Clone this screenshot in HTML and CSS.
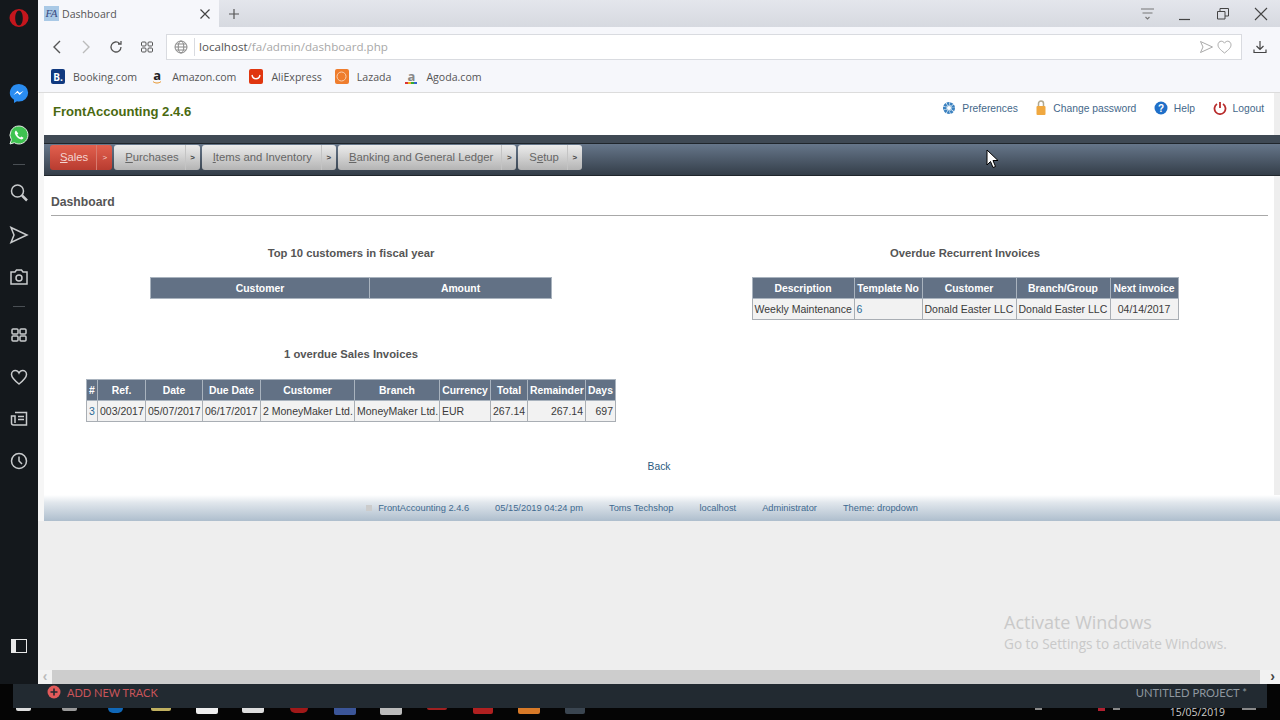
FILE: index.html
```html
<!DOCTYPE html>
<html lang="en">
<head>
  <meta charset="UTF-8">
  <title>Dashboard</title>
  <link rel="stylesheet" href="styles.css">
</head>
<body>
  <div class="screen">
    <aside class="sidebar">
      <div class="slot opera"><svg width="20" height="20" viewBox="0 0 20 20"><path fill-rule="evenodd" d="M10 1a9.500 9 0 1 0 0 18 9.500 9 0 0 0 0-18zm0 1.500c2.200 0 3.800 3.400 3.800 7.500s-1.600 7.500-3.800 7.500S6.200 14.100 6.200 10 7.800 2.500 10 2.500z" fill="#c5161d"/></svg></div>
      <div class="slot"><svg width="20" height="20" viewBox="0 0 20 20"><path d="M10 1a9 8.600 0 0 0-5 15.800V20l3-1.700a10 10 0 0 0 2 .2 9 8.600 0 0 0 0-17.500z" fill="#2a8cf0"/><path d="M4.500 12l4-4.200 2.200 2.200 4-2.200-4 4.200-2.200-2.200z" fill="#fff"/></svg></div>
      <div class="slot"><svg width="20" height="20" viewBox="0 0 20 20"><path d="M10 1a9 9 0 0 0-7.600 13.800L1 19l4.300-1.300A9 9 0 1 0 10 1z" fill="#3fc351" stroke="#e6efe6"/><path d="M7 5.500c-1 .5-1.500 2-1 3.500 1 2.500 3 4.500 5.500 5.300 1.500.3 2.700-.3 3-1.500l-2.200-1.300-1 1c-1.300-.5-2.500-1.700-3-3l1-1z" fill="#fff"/></svg></div>
      <div class="sep"></div>
      <div class="slot"><svg width="20" height="20" viewBox="0 0 20 20" class="line"><circle cx="8.500" cy="8" r="6"/><path d="M13 12.500l5 5" stroke-width="2.500"/></svg></div>
      <div class="slot"><svg width="20" height="20" viewBox="0 0 20 20" class="line"><path d="M2 2.500L18 10 2 17.500 5 10z"/></svg></div>
      <div class="slot"><svg width="20" height="20" viewBox="0 0 20 20" class="line"><path d="M2 5h4l1.500-2h5L14 5h4v12H2z"/><circle cx="10" cy="11" r="3"/></svg></div>
      <div class="sep"></div>
      <div class="slot"><svg width="20" height="20" viewBox="0 0 20 20" class="line"><rect x="3" y="4" width="6" height="5" rx="1"/><rect x="11" y="4" width="6" height="5" rx="1"/><rect x="3" y="11" width="6" height="5" rx="1"/><rect x="11" y="11" width="6" height="5" rx="1"/></svg></div>
      <div class="slot"><svg width="20" height="20" viewBox="0 0 20 20" class="line"><path d="M10 17C5 13 2.500 10.500 2.500 7.500 2.500 5 4.500 3.500 6.300 3.500 8 3.500 9.300 4.500 10 6c.7-1.500 2-2.500 3.700-2.500 1.800 0 3.800 1.500 3.800 4 0 3-2.500 5.500-7.500 9.500z"/></svg></div>
      <div class="slot"><svg width="20" height="20" viewBox="0 0 20 20" class="line"><path d="M6 3.500h11.500v12.500H4.500A2 2 0 0 1 2.500 14V7H6v7"/><path d="M9 7.500h6M9 10.500h6"/></svg></div>
      <div class="slot"><svg width="20" height="20" viewBox="0 0 20 20" class="line"><circle cx="10" cy="10" r="7.500"/><path d="M10 5.500V10l3 3"/></svg></div>
      <div class="slot-end"><svg width="16" height="14" viewBox="0 0 16 14"><rect x=".5" y=".5" width="15" height="13" fill="#14181c" stroke="#e8e8e8"/><rect x="1" y="1" width="4" height="12" fill="#e8e8e8"/></svg></div>
    </aside>

    <div class="browser">
      <div class="tabstrip">
        <div class="tab">
          <span class="favicon"><i>F</i><i>A</i></span>
          <span class="tab-title">Dashboard</span>
          <svg class="tab-close" width="12" height="12" viewBox="0 0 12 12"><path d="M1.500 1.500l9 9M10.500 1.500l-9 9" stroke="#444" stroke-width="1.200"/></svg>
        </div>
        <svg class="tab-plus" width="12" height="12" viewBox="0 0 12 12"><path d="M6 1v10M1 6h10" stroke="#555" stroke-width="1.200"/></svg>
        <div class="win-controls">
          <svg class="win-filter" width="16" height="16" viewBox="0 0 16 16"><path d="M1 3h13M2.500 7h10M5.500 11l2 2 2-2" fill="none" stroke="#777" stroke-width="1.100"/></svg>
          <svg width="14" height="14" viewBox="0 0 14 14"><path d="M1 12.500h11" stroke="#444" stroke-width="1.200"/></svg>
          <svg width="14" height="14" viewBox="0 0 14 14"><path d="M1.500 4.500h7.500v7.500H1.500zM4 4.500V1.500h8.500V9H9" fill="none" stroke="#444"/></svg>
          <svg width="14" height="14" viewBox="0 0 14 14"><path d="M1 1l12 12M13 1L1 13" stroke="#444" stroke-width="1.100"/></svg>
        </div>
      </div>

      <div class="toolbar">
        <div class="nav-icons">
          <svg width="12" height="16" viewBox="0 0 12 16"><path d="M9 2L3 8l6 6" fill="none" stroke="#555" stroke-width="1.400"/></svg>
          <svg width="12" height="16" viewBox="0 0 12 16"><path d="M3 2l6 6-6 6" fill="none" stroke="#bbb" stroke-width="1.400"/></svg>
          <svg width="14" height="14" viewBox="0 0 14 14"><path d="M12 7a5 5 0 1 1-1.500-3.600M12 1v3H9" fill="none" stroke="#555" stroke-width="1.300"/></svg>
          <svg width="14" height="14" viewBox="0 0 14 14" class="grid-ic"><rect x="1.500" y="2" width="4.500" height="4" rx="1"/><rect x="8" y="2" width="4.500" height="4" rx="1"/><rect x="1.500" y="8" width="4.500" height="4" rx="1"/><rect x="8" y="8" width="4.500" height="4" rx="1"/></svg>
        </div>
        <div class="address">
          <svg class="globe" width="14" height="14" viewBox="0 0 14 14"><g fill="none" stroke="#888"><circle cx="7" cy="7" r="6"/><ellipse cx="7" cy="7" rx="2.800" ry="6"/><path d="M1 7h12M2 4h10M2 10h10"/></g></svg>
          <span class="url"><b>localhost</b>/fa/admin/dashboard.php</span>
          <svg width="15" height="14" viewBox="0 0 15 14"><path d="M1.500 1.500L13.500 7 1.500 12.500 4 7z" fill="none" stroke="#aaa"/></svg>
          <svg width="15" height="14" viewBox="0 0 15 14"><path d="M7.500 13C3 9.500 1 7.500 1 4.800 1 2.700 2.600 1.200 4.300 1.200c1.400 0 2.500.8 3.200 2 .7-1.200 1.800-2 3.200-2C12.400 1.200 14 2.700 14 4.800c0 2.700-2 4.700-6.500 8.200z" fill="none" stroke="#aaa"/></svg>
        </div>
        <svg class="download" width="14" height="14" viewBox="0 0 14 14"><path d="M7 1v8M3.500 6L7 9.500 10.500 6M1 9.500v3h12v-3" fill="none" stroke="#444" stroke-width="1.200"/></svg>
      </div>

      <div class="bookmarks">
        <div class="bm"><span class="bm-ic bm-booking">B.</span>Booking.com</div>
        <div class="bm"><span class="bm-ic bm-amazon">a<svg width="10" height="3" viewBox="0 0 10 3"><path d="M1 .5c2 2 6 2 8 0" fill="none" stroke="#e8952a"/></svg></span>Amazon.com</div>
        <div class="bm"><span class="bm-ic bm-ali"><svg width="10" height="6" viewBox="0 0 10 6"><path d="M1 1c1 5 7 5 8 0" fill="none" stroke="#fff" stroke-width="1.400"/></svg></span>AliExpress</div>
        <div class="bm"><span class="bm-ic bm-lazada"><svg width="11" height="11" viewBox="0 0 11 11"><circle cx="5.500" cy="5.500" r="4.500" fill="none" stroke="#f8d0b0"/></svg></span>Lazada</div>
        <div class="bm"><span class="bm-ic bm-agoda">a<span class="agoda-dots"></span></span>Agoda.com</div>
      </div>

      <div class="viewport">
        <div class="page">
          <header class="fa-header">
            <div class="fa-brand">FrontAccounting 2.4.6</div>
            <nav class="fa-links">
              <a class="fa-link"><svg width="14" height="14" viewBox="0 0 14 14"><circle cx="7" cy="7" r="4.500" fill="none" stroke="#3c82c0" stroke-width="3" stroke-dasharray="2.500 .6"/><circle cx="7" cy="7" r="2.500" fill="none" stroke="#7fb0d8"/></svg>Preferences</a>
              <a class="fa-link"><svg width="12" height="16" viewBox="0 0 12 16"><rect x="1.500" y="6" width="9" height="9" rx="1" fill="#f0a840"/><path d="M3.500 6V3.500a2.500 2.500 0 0 1 5 0V6" fill="none" stroke="#b0a890" stroke-width="1.500"/></svg>Change password</a>
              <a class="fa-link"><svg width="14" height="14" viewBox="0 0 14 14"><circle cx="7" cy="7" r="6.500" fill="#1f6fc8"/><text x="7" y="10.500" class="help-q">?</text></svg>Help</a>
              <a class="fa-link"><svg width="14" height="14" viewBox="0 0 14 14"><path d="M4 3a5.500 5.500 0 1 0 6 0M7 1v6" fill="none" stroke="#b82c2c" stroke-width="1.800"/></svg>Logout</a>
            </nav>
          </header>

          <div class="menu-band"></div>
          <nav class="menu">
            <a class="menu-btn active"><span class="menu-label"><u>S</u>ales</span><span class="menu-arrow">&gt;</span></a>
            <a class="menu-btn"><span class="menu-label"><u>P</u>urchases</span><span class="menu-arrow">&gt;</span></a>
            <a class="menu-btn"><span class="menu-label"><u>I</u>tems and Inventory</span><span class="menu-arrow">&gt;</span></a>
            <a class="menu-btn"><span class="menu-label"><u>B</u>anking and General Ledger</span><span class="menu-arrow">&gt;</span></a>
            <a class="menu-btn"><span class="menu-label">S<u>e</u>tup</span><span class="menu-arrow">&gt;</span></a>
          </nav>

          <div class="content">
            <h2 class="page-title">Dashboard</h2>
            <div class="dash-grid">
              <section>
                <div class="box-title">Top 10 customers in fiscal year</div>
                <table class="data customers">
                  <colgroup><col><col></colgroup>
                  <tr><th>Customer</th><th>Amount</th></tr>
                </table>
                <div class="box-title second">1 overdue Sales Invoices</div>
                <table class="data overdue">
                  <colgroup><col><col><col><col><col><col><col><col><col><col></colgroup>
                  <tr><th>#</th><th>Ref.</th><th>Date</th><th>Due Date</th><th>Customer</th><th>Branch</th><th>Currency</th><th>Total</th><th>Remainder</th><th>Days</th></tr>
                  <tr><td class="num-link">3</td><td>003/2017</td><td>05/07/2017</td><td>06/17/2017</td><td>2 MoneyMaker Ltd.</td><td>MoneyMaker Ltd.</td><td>EUR</td><td class="r">267.14</td><td class="r">267.14</td><td class="r">697</td></tr>
                </table>
              </section>
              <section>
                <div class="box-title">Overdue Recurrent Invoices</div>
                <table class="data recurrent">
                  <colgroup><col><col><col><col><col></colgroup>
                  <tr><th>Description</th><th>Template No</th><th>Customer</th><th>Branch/Group</th><th>Next invoice</th></tr>
                  <tr><td>Weekly Maintenance</td><td class="num-link">6</td><td>Donald Easter LLC</td><td>Donald Easter LLC</td><td class="c">04/14/2017</td></tr>
                </table>
              </section>
            </div>
            <a class="back">Back</a>
          </div>

          <footer class="fa-footer">
            <span class="foot-logo"><span class="foot-mark"></span>FrontAccounting 2.4.6</span>
            <span>05/15/2019 04:24 pm</span>
            <span>Toms Techshop</span>
            <span>localhost</span>
            <span>Administrator</span>
            <span>Theme: dropdown</span>
          </footer>
        </div>
        <div class="hscroll">
          <span class="scroll-btn">&lsaquo;</span>
          <span class="scroll-thumb"></span>
          <span class="scroll-btn dark">&rsaquo;</span>
        </div>
      </div>
    </div>
  </div>

  <div class="dock">
    <div class="track-bar">
      <span class="add-track"><svg width="14" height="14" viewBox="0 0 14 14"><circle cx="7" cy="7" r="6.500" fill="#e25a5a"/><path d="M7 3.500v7M3.500 7h7" stroke="#222a31" stroke-width="1.600"/></svg>ADD NEW TRACK</span>
      <span class="project">UNTITLED PROJECT *</span>
    </div>
    <div class="taskbar">
      <span class="task t-white"></span>
      <span class="task t-outline"></span>
      <span class="task t-blue"></span>
      <span class="task t-yellow"></span>
      <span class="task t-store"></span>
      <span class="task t-white wide"></span>
      <span class="task t-opera"></span>
      <span class="task t-fb"></span>
      <span class="task t-cam"></span>
      <span class="task t-dark-red"></span>
      <span class="task t-red"></span>
      <span class="task t-orange"></span>
      <span class="task t-slate"></span>
      <div class="tray">
        <span class="tray-mark"></span>
        <span class="tray-mark red"></span>
        <span class="tray-mark"></span>
        <span class="tray-date">15/05/2019</span>
        <span class="tray-mark last"></span>
      </div>
    </div>
  </div>

  <div class="activate">
    <div class="activate-big">Activate Windows</div>
    <div class="activate-small">Go to Settings to activate Windows.</div>
  </div>

  <svg class="cursor" width="13" height="20" viewBox="0 0 13 20"><path d="M1 1v15l3.500-3.500 2.500 6 2.500-1-2.500-6h5z" fill="#fff" stroke="#000"/></svg>
</body>
</html>
```

FILE: styles.css
```css
* {
  box-sizing: border-box;
}

body {
  margin: 0;
  width: 1280px;
  height: 720px;
  overflow: hidden;
  position: relative;
  background: #000;
  font-family: "Liberation Sans", Arial, sans-serif;
  color: #444;
}

svg {
  display: block;
  flex: none;
}

.screen {
  display: flex;
  height: 684px;
}

/* opera sidebar */
.sidebar {
  width: 38px;
  flex: none;
  background: #14181c;
  display: flex;
  flex-direction: column;
  align-items: center;
}

.slot {
  height: 42px;
  width: 100%;
  display: flex;
  align-items: center;
  justify-content: center;
}

.opera {
  height: 36px;
  margin-bottom: 36px;
}

.sep {
  width: 12px;
  height: 1px;
  margin: 8px 0 7px;
  background: #4a4f54;
}

.slot-end {
  margin-top: auto;
  margin-bottom: 31px;
}

.line {
  fill: none;
  stroke: #c9cbcd;
  stroke-width: 1.500;
}

/* browser chrome */
.browser {
  flex: 1;
  min-width: 0;
  display: flex;
  flex-direction: column;
}

.tabstrip {
  height: 27px;
  flex: none;
  background: linear-gradient(#e4e6ec, #d6d9e0);
  display: flex;
  align-items: center;
}

.tab {
  width: 181px;
  height: 27px;
  padding: 0 0 0 6px;
  background: #f6f7fb;
  display: flex;
  align-items: center;
  font-family: "Open Sans", sans-serif;
  font-size: 10.6px;
  color: #555;
}

.favicon {
  width: 15px;
  height: 15px;
  margin-right: 3px;
  background: #a9c9e6;
  color: #3a4a80;
  font-family: "Liberation Serif", serif;
  font-size: 11px;
  line-height: 15px;
  text-align: center;
}

.tab-title {
  flex: 1;
}

.tab-close {
  margin-right: 8px;
}

.tab-plus {
  margin-left: 9px;
}

.win-controls {
  margin-left: auto;
  display: flex;
  align-items: center;
  gap: 24px;
  padding-right: 12px;
}

.win-filter {
  margin-right: -2px;
}

.toolbar {
  height: 33px;
  flex: none;
  background: #f6f7fb;
  display: flex;
  align-items: center;
  padding-top: 6px;
}

.nav-icons {
  width: 128px;
  padding-left: 13px;
  display: flex;
  align-items: center;
  gap: 17px;
}

.grid-ic {
  fill: none;
  stroke: #555;
}

.address {
  width: 1076px;
  height: 26px;
  background: #fff;
  border: 1px solid #d9dbe0;
  display: flex;
  align-items: center;
  padding: 0 9px 0 7px;
  gap: 3px;
}

.globe {
  margin-right: 3px;
}

.url {
  flex: 1;
  padding-left: 4px;
  height: 18px;
  border-left: 1px solid #d9dbe0;
  font-family: "Open Sans", sans-serif;
  font-size: 11.6px;
  line-height: 18px;
  color: #a8a8a8;
}

.url b {
  font-weight: 400;
  color: #555;
}

.download {
  margin-left: 11px;
}

.bookmarks {
  height: 33px;
  flex: none;
  background: #f6f7fb;
  border-bottom: 1px solid #dcdcdc;
  display: flex;
  align-items: center;
  padding: 1px 0 0 13px;
  gap: 13px;
  font-family: "Open Sans", sans-serif;
  font-size: 10.6px;
  color: #555;
}

.bm {
  display: flex;
  align-items: center;
  gap: 8px;
}

.bm-ic {
  width: 14px;
  height: 15px;
  display: flex;
  flex-direction: column;
  align-items: center;
  justify-content: center;
  font-size: 10px;
  font-weight: 700;
  border-radius: 2px;
}

.bm-booking {
  background: #10397f;
  color: #fff;
}

.bm-amazon {
  color: #222;
  font-size: 13px;
  line-height: 11px;
}

.bm-ali {
  background: #e0360f;
}

.bm-lazada {
  background: #ef7d2d;
}

.bm-agoda {
  color: #888;
  font-size: 13px;
  line-height: 12px;
}

.agoda-dots {
  width: 12px;
  height: 2px;
  background: linear-gradient(90deg, #d33 25%, #e8b020 25% 50%, #3a3 50% 75%, #36c 75%);
}

/* page inside the browser */
.viewport {
  flex: 1;
  min-height: 0;
  display: flex;
  flex-direction: column;
  background: #eeeeee;
}

.page {
  flex: 1;
  min-height: 0;
  padding-left: 6px;
  background: linear-gradient(#f6f6f6, #f6f6f6) left top / 6px 428px no-repeat, #eeeeee;
}

.fa-header {
  height: 42px;
  margin-right: 6px;
  background: #fff;
  display: flex;
  justify-content: space-between;
  align-items: flex-start;
}

.fa-brand {
  padding: 11px 0 0 9px;
  font-size: 13.1px;
  line-height: 16px;
  font-weight: 700;
  color: #4a6a10;
}

.fa-links {
  display: flex;
  align-items: center;
  gap: 17.5px;
  padding: 7px 10px 0 0;
}

.fa-link {
  display: flex;
  align-items: center;
  gap: 6px;
  height: 16px;
  font-size: 10.3px;
  color: #44688a;
}

.help-q {
  fill: #fff;
  font-size: 10px;
  font-weight: 700;
  text-anchor: middle;
}

.menu-band {
  height: 8px;
  background: #3f4954;
}

.menu {
  height: 33px;
  padding: 1px 0 0 6px;
  border-top: 1px solid #1f252b;
  border-bottom: 1px solid #1f252b;
  background: linear-gradient(#66768a, #343e49);
  display: flex;
  align-items: flex-start;
  gap: 2px;
}

.menu-btn {
  height: 25px;
  display: flex;
  align-items: center;
  font-size: 11.3px;
  color: #666;
  border-radius: 3px;
  background: linear-gradient(#ececec, #b4b4b4);
}

.menu-label {
  padding: 0 8px 1px 11px;
}

.menu-btn:nth-child(2) .menu-label {
  padding-right: 6px;
}

.menu-btn:nth-child(3) .menu-label {
  padding-right: 9px;
}

.menu-arrow {
  width: 15px;
  height: 25px;
  line-height: 25px;
  text-align: center;
  border-left: 1px solid #c4c4c4;
  font-size: 8px;
  font-weight: 700;
  color: #444;
}

.menu-btn.active {
  background: linear-gradient(#e2604e, #b83c30);
  color: #f4d4d0;
}

.menu-btn.active .menu-label {
  padding: 0 8px 1px 10px;
}

.menu-btn.active .menu-arrow {
  width: 16px;
  border-left-color: #d87a6e;
  color: #f4d4d0;
  font-weight: 400;
}

.content {
  height: 319px;
  margin-right: 6px;
  background: #fff;
  display: flex;
  flex-direction: column;
}

.page-title {
  margin: 0 6px 0 7px;
  padding: 19px 0 6px 0;
  height: 40px;
  border-bottom: 1px solid #a8a8a8;
  font-size: 12.2px;
  line-height: 14px;
  font-weight: 700;
  color: #555;
}

.dash-grid {
  display: grid;
  grid-template-columns: 614px 614px;
  padding-top: 30px;
}

.box-title {
  height: 14px;
  margin-bottom: 17px;
  font-size: 11.25px;
  line-height: 14px;
  font-weight: 700;
  color: #555;
  text-align: center;
}

.box-title.second {
  margin-top: 48px;
  margin-bottom: 18px;
}

.data {
  table-layout: fixed;
  border-collapse: collapse;
  margin: 0 auto;
  font-size: 10.5px;
}

.data th {
  height: 21px;
  padding: 0 2px;
  background: #627185;
  border: 1px solid #a9b3be;
  font-size: 10.4px;
  color: #fff;
  font-weight: 700;
  white-space: nowrap;
}

.data td {
  height: 21px;
  padding: 0 2px 1px;
  background: #f2f2f2;
  border: 1px solid #a9aeb4;
  color: #3a3a3a;
  white-space: nowrap;
}

.data .r {
  text-align: right;
}

.data .c {
  text-align: center;
}

.data .num-link {
  color: #2a6a96;
}

.customers {
  width: 401px;
}

.customers col:nth-child(1) { width: 219px; }
.customers col:nth-child(2) { width: 182px; }

.overdue {
  width: 529px;
}

.overdue col:nth-child(1) { width: 11px; }
.overdue col:nth-child(2) { width: 48px; }
.overdue col:nth-child(3) { width: 57px; }
.overdue col:nth-child(4) { width: 58px; }
.overdue col:nth-child(5) { width: 94px; }
.overdue col:nth-child(6) { width: 85px; }
.overdue col:nth-child(7) { width: 51px; }
.overdue col:nth-child(8) { width: 37px; }
.overdue col:nth-child(9) { width: 58px; }
.overdue col:nth-child(10) { width: 30px; }

.recurrent {
  width: 426px;
}

.recurrent col:nth-child(1) { width: 102px; }
.recurrent col:nth-child(2) { width: 68px; }
.recurrent col:nth-child(3) { width: 94px; }
.recurrent col:nth-child(4) { width: 94px; }
.recurrent col:nth-child(5) { width: 68px; }

.back {
  margin-top: 38px;
  font-size: 10.3px;
  line-height: 14px;
  color: #2a5a80;
  text-align: center;
}

.fa-footer {
  height: 26px;
  padding: 0 40px 1px 0;
  display: flex;
  align-items: center;
  justify-content: center;
  gap: 26px;
  font-size: 9.3px;
  color: #3f6a90;
  background: linear-gradient(#ffffff, #e0e6ec 30%, #aebecd);
}

.foot-logo {
  display: flex;
  align-items: center;
  gap: 6px;
}

.foot-mark {
  width: 6px;
  height: 6px;
  background: #ccc;
}

.hscroll {
  height: 14px;
  flex: none;
  display: flex;
  background: #eee;
}

.scroll-btn {
  width: 14px;
  text-align: center;
  font-size: 14px;
  line-height: 13px;
  font-weight: 700;
  color: #bbb;
  background: #f2f2f2;
}

.scroll-btn.dark {
  width: 20px;
  padding-left: 5px;
  color: #444;
}

.scroll-thumb {
  flex: 1;
  background: #cdcdcd;
}

/* bottom of the recording */
.dock {
  height: 36px;
  background: #050505;
}

.track-bar {
  height: 24px;
  margin: 0 13px;
  padding: 0 20px 8px 34px;
  background: #222a31;
  display: flex;
  align-items: center;
  justify-content: space-between;
  font-family: "Lato", sans-serif;
  font-size: 11px;
}

.add-track {
  display: flex;
  align-items: center;
  gap: 6px;
  color: #c8555a;
}

.project {
  font-size: 11.2px;
  color: #8e979f;
}

.taskbar {
  height: 12px;
  display: grid;
  grid-template-columns: repeat(13, 46px) 1fr;
  justify-items: center;
  align-items: start;
}

.task {
  width: 22px;
  height: 6px;
  background: #ddd;
  border-radius: 0 0 2px 2px;
}

.t-white {
  width: 15px;
  height: 3px;
}

.t-white.wide {
  width: 22px;
  height: 5px;
}

.t-outline {
  width: 15px;
  height: 3px;
  background: #999;
}

.t-blue {
  width: 15px;
  height: 5px;
  background: #1068b8;
  border-radius: 0 0 8px 8px;
}

.t-yellow {
  width: 20px;
  height: 3px;
  background: #c0b060;
}

.t-store {
  background: #eee;
}

.t-opera {
  width: 18px;
  height: 5px;
  background: #a01818;
  border-radius: 0 0 9px 9px;
}

.t-fb {
  background: #3b5598;
  height: 7px;
}

.t-cam {
  background: #bbb;
  height: 7px;
}

.t-dark-red {
  width: 20px;
  height: 2px;
  background: #a02020;
}

.t-red {
  width: 20px;
  height: 6px;
  background: #b02020;
}

.t-orange {
  height: 6px;
  background: #d87a28;
}

.t-slate {
  width: 20px;
  height: 6px;
  background: #3a4550;
}

.tray {
  width: 100%;
  display: flex;
  align-items: flex-start;
  justify-content: flex-end;
  gap: 8px;
  padding-right: 24px;
}

.tray-mark {
  width: 7px;
  height: 2px;
  background: #888;
}

.tray-mark.red {
  margin-left: 48px;
  height: 3px;
  background: #b02030;
}

.tray-date {
  margin: 0 9px 0 42px;
  font-family: "Open Sans", sans-serif;
  font-size: 10.4px;
  line-height: 9px;
  color: #ccc;
}

.tray-mark.last {
  width: 14px;
}

/* overlays */
.activate {
  position: absolute;
  left: 1004px;
  top: 611px;
  font-family: "Open Sans", sans-serif;
  color: #c9c9c9;
}

.activate-big {
  font-size: 18px;
  line-height: 23px;
}

.activate-small {
  margin-top: 1px;
  font-size: 13.6px;
  line-height: 18px;
}

.cursor {
  position: absolute;
  left: 986px;
  top: 149px;
}
```
